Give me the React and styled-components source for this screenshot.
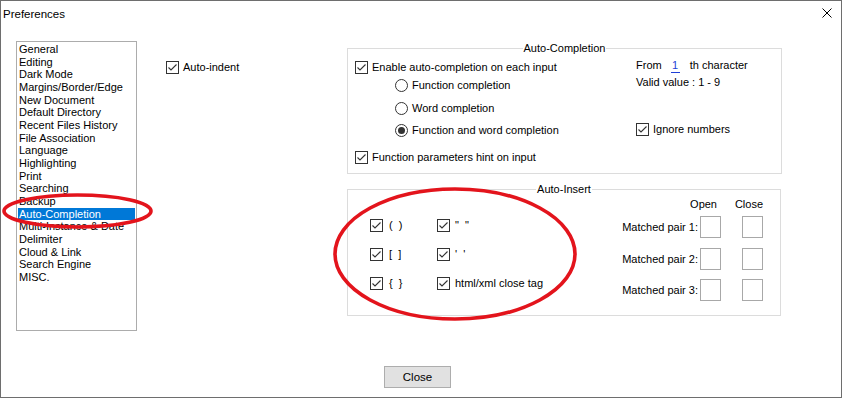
import React from 'react';
import styled, { createGlobalStyle } from 'styled-components';

const GlobalStyle = createGlobalStyle`
  html, body {
    margin: 0;
    padding: 0;
    background: #fff;
  }
  body {
    font-family: 'Liberation Sans', Arial, sans-serif;
    font-size: 11px;
    color: #000;
  }
`;

const Window = styled.div`
  position: relative;
  width: 842px;
  height: 398px;
  box-sizing: border-box;
  border: 1px solid #6e6e6e;
  background: #fff;
  display: flex;
  flex-direction: column;
  overflow: hidden;
`;

const TitleBar = styled.div`
  height: 26px;
  flex-shrink: 0;
  display: flex;
  align-items: center;
  justify-content: space-between;
  padding: 0 9px 0 2px;
`;

const Title = styled.span`
  font-size: 11.5px;
`;

const CloseX = styled.svg`
  width: 10px;
  height: 10px;
  margin-top: -3px;
`;

const Body = styled.div`
  flex: 1;
  display: flex;
  align-items: flex-start;
  padding: 14px 0 0 15px;
`;

const ListBox = styled.div`
  width: 121px;
  height: 290px;
  box-sizing: border-box;
  border: 1px solid #acacac;
  padding: 1px 1px 0;
  flex-shrink: 0;
`;

const ListItem = styled.div`
  height: 12.67px;
  line-height: 12.67px;
  padding-left: 1px;
  white-space: nowrap;
  overflow: hidden;
  background: ${p => (p.$selected ? '#0078d7' : 'transparent')};
  color: ${p => (p.$selected ? '#fff' : '#000')};
`;

const IndentPane = styled.div`
  width: 181px;
  margin-left: 29px;
  padding-top: 17px;
  flex-shrink: 0;
`;

const GroupsColumn = styled.div`
  width: 435px;
  display: flex;
  flex-direction: column;
`;

const GroupBox = styled.fieldset`
  margin: ${p => p.$mt || 0}px 0 0;
  padding: 0;
  border: 1px solid #dcdcdc;
  min-width: 0;
  width: ${p => p.$w}px;
  box-sizing: border-box;

  legend {
    margin: 0 auto;
    padding: 0 1px;
    line-height: 14px;
  }
`;

const CompletionGrid = styled.div`
  display: grid;
  grid-template-columns: 281px 1fr;
  padding: 0 0 7px 7px;
`;

const Stack = styled.div`
  display: flex;
  flex-direction: column;
`;

const Row = styled.div`
  height: 18px;
  display: flex;
  align-items: center;
  gap: ${p => (p.$gap != null ? p.$gap : 4)}px;
  margin-top: ${p => p.$mt || 0}px;
  margin-left: ${p => p.$indent || 0}px;
  white-space: pre;
`;

const TextLine = styled.div`
  line-height: 17px;
  margin-top: ${p => p.$mt || 0}px;
  white-space: nowrap;
`;

const ValueField = styled.span`
  display: inline-block;
  width: 9px;
  margin: 0 10px 0 9px;
  text-align: center;
  color: #1f3fd6;
  border-bottom: 1px solid #1f3fd6;
  line-height: 13px;
`;

const Box = styled.span`
  width: 13px;
  height: 13px;
  box-sizing: border-box;
  border: 1px solid #333;
  background: #fff;
  display: inline-flex;
  align-items: center;
  justify-content: center;
  flex-shrink: 0;
`;

const RadioRing = styled.span`
  width: 13px;
  height: 13px;
  box-sizing: border-box;
  border: 1px solid #333;
  border-radius: 50%;
  background: #fff;
  display: inline-flex;
  align-items: center;
  justify-content: center;
  flex-shrink: 0;

  &::after {
    content: '';
    width: 7px;
    height: 7px;
    border-radius: 50%;
    background: ${p => (p.$on ? '#333' : 'transparent')};
  }
`;

const InsertPane = styled.div`
  display: flex;
  padding: 0 17px 13.5px 22px;
`;

const InsertGrid = styled.div`
  display: grid;
  grid-template-columns: 67px auto;
  grid-auto-rows: 18px;
  row-gap: 11px;
  margin-top: 20px;
`;

const PairGrid = styled.div`
  margin-left: auto;
  display: grid;
  grid-template-columns: auto 23px 42px;
  grid-template-rows: 10.5px repeat(3, 22px);
  row-gap: 9.5px;
`;

const ColHead = styled.span`
  justify-self: end;
  align-self: start;
  line-height: 16px;
  margin-right: ${p => p.$shift || 0}px;
`;

const PairLabel = styled.span`
  justify-self: end;
  align-self: center;
  white-space: nowrap;
`;

const EditBox = styled.span`
  justify-self: end;
  width: 21px;
  height: 22px;
  box-sizing: border-box;
  border: 1px solid #a8a8a8;
  background: #fff;
`;

const Footer = styled.div`
  flex-shrink: 0;
  display: flex;
  padding: 0 0 9px 383px;
`;

const Button = styled.button`
  width: 67px;
  height: 22px;
  box-sizing: border-box;
  border: 1px solid #adadad;
  background: #e1e1e1;
  font-family: 'Liberation Sans', Arial, sans-serif;
  font-size: 11.5px;
  color: #000;
  padding: 0;
`;

const Annotations = styled.svg`
  position: absolute;
  left: -1px;
  top: -1px;
  width: 842px;
  height: 398px;
  pointer-events: none;
`;

const Check = () => (
  <svg width="11" height="11" viewBox="0 0 11 11">
    <polyline points="1.5,5.5 4,8 9.5,2.5" fill="none" stroke="#333" strokeWidth="1.1" />
  </svg>
);

const CheckBox = ({ label, mt, indent, gap }) => (
  <Row $mt={mt} $indent={indent} $gap={gap}>
    <Box>
      <Check />
    </Box>
    <span>{label}</span>
  </Row>
);

const Radio = ({ label, on, mt }) => (
  <Row $mt={mt} $indent={40}>
    <RadioRing $on={on} />
    <span>{label}</span>
  </Row>
);

const sections = [
  'General',
  'Editing',
  'Dark Mode',
  'Margins/Border/Edge',
  'New Document',
  'Default Directory',
  'Recent Files History',
  'File Association',
  'Language',
  'Highlighting',
  'Print',
  'Searching',
  'Backup',
  'Auto-Completion',
  'Multi-Instance & Date',
  'Delimiter',
  'Cloud & Link',
  'Search Engine',
  'MISC.',
];

const pairs = ['Matched pair 1:', 'Matched pair 2:', 'Matched pair 3:'];

export default function App() {
  return (
    <>
      <GlobalStyle />
      <Window>
        <TitleBar>
          <Title>Preferences</Title>
          <CloseX viewBox="0 0 10 10">
            <path d="M0.5 0.5 L9.5 9.5 M9.5 0.5 L0.5 9.5" stroke="#000" strokeWidth="1" />
          </CloseX>
        </TitleBar>

        <Body>
          <ListBox>
            {sections.map(s => (
              <ListItem key={s} $selected={s === 'Auto-Completion'}>
                {s}
              </ListItem>
            ))}
          </ListBox>

          <IndentPane>
            <CheckBox label="Auto-indent" />
          </IndentPane>

          <GroupsColumn>
            <GroupBox $w={435}>
              <legend>Auto-Completion</legend>
              <CompletionGrid>
                <Stack>
                  <CheckBox label="Enable auto-completion on each input" mt={3} />
                  <Radio label="Function completion" />
                  <Radio label="Word completion" mt={5} />
                  <Radio label="Function and word completion" on mt={4} />
                  <CheckBox label="Function parameters hint on input" mt={9} />
                </Stack>
                <Stack>
                  <TextLine $mt={1.5}>
                    From<ValueField>1</ValueField>th character
                  </TextLine>
                  <TextLine>Valid value : 1 - 9</TextLine>
                  <CheckBox label="Ignore numbers" mt={29.5} />
                </Stack>
              </CompletionGrid>
            </GroupBox>

            <GroupBox $w={434} $mt={8}>
              <legend>Auto-Insert</legend>
              <InsertPane>
                <InsertGrid>
                  <CheckBox label="(  )" gap={6} />
                  <CheckBox label={'"  "'} gap={5} />
                  <CheckBox label="[  ]" gap={6} />
                  <CheckBox label="'  '" gap={5} />
                  <CheckBox label="{  }" gap={6} />
                  <CheckBox label="html/xml close tag" gap={5} />
                </InsertGrid>
                <PairGrid>
                  <span />
                  <ColHead $shift={4}>Open</ColHead>
                  <ColHead>Close</ColHead>
                  {pairs.map(p => (
                    <React.Fragment key={p}>
                      <PairLabel>{p}</PairLabel>
                      <EditBox />
                      <EditBox />
                    </React.Fragment>
                  ))}
                </PairGrid>
              </InsertPane>
            </GroupBox>
          </GroupsColumn>
        </Body>

        <Footer>
          <Button>Close</Button>
        </Footer>

        <Annotations viewBox="0 0 842 398">
          <ellipse cx="77.5" cy="211" rx="73.5" ry="16" fill="none" stroke="#e3141c" strokeWidth="3.6" />
          <ellipse cx="455" cy="254" rx="120" ry="65" fill="none" stroke="#e3141c" strokeWidth="3.6" />
        </Annotations>
      </Window>
    </>
  );
}
